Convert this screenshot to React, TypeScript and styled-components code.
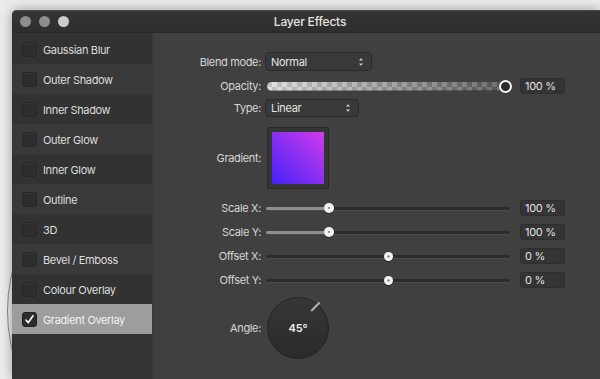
import React from "react";
import styled, { createGlobalStyle } from "styled-components";

const GlobalStyle = createGlobalStyle`
  html, body {
    margin: 0;
    padding: 0;
    background: #ececec;
    font-family: "Inter", "Liberation Sans", sans-serif;
    -webkit-font-smoothing: antialiased;
  }
  #root {
    width: 600px;
    height: 379px;
    overflow: hidden;
  }
`;

const Stage = styled.div`
  position: relative;
  width: 600px;
  height: 379px;
  padding: 10px 0 0 12px;
  box-sizing: border-box;
  overflow: hidden;
`;

// Edge of a round loupe peeking from behind the window
const Loupe = styled.div`
  position: absolute;
  left: 7px;
  top: 146px;
  width: 330px;
  height: 330px;
  border-radius: 50%;
  border: 1.5px solid #8c8c8c;
  box-sizing: border-box;
  z-index: 0;
`;

const Window = styled.div`
  position: relative;
  z-index: 1;
  width: 588px;
  height: 369px;
  display: flex;
  flex-direction: column;
  background: #404040;
  box-shadow: 0 0 12px rgba(0, 0, 0, 0.35);
  border-top-left-radius: 5px;
  overflow: hidden;
`;

const TitleBar = styled.div`
  position: relative;
  height: 22px;
  flex: 0 0 22px;
  display: flex;
  align-items: center;
  padding-left: 8px;
  gap: 8px;
  background: linear-gradient(#353535, #2e2e2e);
  border-top: 1px solid #4a4a4a;
  box-sizing: border-box;
`;

const Light = styled.span<{ $tone: string }>`
  width: 11px;
  height: 11px;
  border-radius: 50%;
  background: ${({ $tone }) => $tone};
`;

const Title = styled.div`
  position: absolute;
  left: 0;
  right: 0;
  text-align: center;
  padding-left: 8px;
  font-size: 12px;
  font-weight: 500;
  letter-spacing: -0.2px;
  color: #e2e2e2;
  pointer-events: none;
`;

const Body = styled.div`
  flex: 1;
  display: flex;
  border-top: 1px solid #2a2a2a;
`;

const Sidebar = styled.div`
  width: 141px;
  flex: 0 0 141px;
  background: #333333;
  display: flex;
  flex-direction: column;
  padding-top: 1px;
  border-right: 1px solid #3a3a3a;
  box-sizing: border-box;
`;

const EffectRow = styled.div<{ $alt: boolean; $selected: boolean }>`
  height: 30px;
  display: flex;
  align-items: center;
  gap: 6px;
  padding: 1px 0 0 10px;
  box-sizing: border-box;
  font-size: 11px;
  letter-spacing: -0.35px;
  color: ${({ $selected }) => ($selected ? "#f2f2f2" : "#dcdcdc")};
  background: ${({ $alt, $selected }) =>
    $selected ? "#9d9d9d" : $alt ? "#393939" : "#323232"};
`;

const Check = styled.span<{ $on: boolean }>`
  width: 15px;
  height: 15px;
  border-radius: 3px;
  box-sizing: border-box;
  display: flex;
  align-items: center;
  justify-content: center;
  background: ${({ $on }) => ($on ? "#2c2c2c" : "#2e2e2e")};
  border: 1px solid ${({ $on }) => ($on ? "#1f1f1f" : "#262626")};
  box-shadow: inset 0 1px 0 rgba(255, 255, 255, 0.04);
`;

const Panel = styled.div`
  flex: 1;
  padding-top: 19px;
  display: flex;
  flex-direction: column;
`;

const Row = styled.div<{ $h: number; $top: number }>`
  height: ${({ $h }) => $h}px;
  margin-top: ${({ $top }) => $top}px;
  display: grid;
  grid-template-columns: 108px 1fr;
  column-gap: 4px;
  align-items: center;
`;

const Label = styled.div`
  text-align: right;
  font-size: 11px;
  letter-spacing: -0.35px;
  color: #d6d6d6;
`;

const Controls = styled.div`
  display: flex;
  align-items: center;
  height: 100%;
`;

const Select = styled.div<{ $w: number }>`
  width: ${({ $w }) => $w}px;
  height: 100%;
  box-sizing: border-box;
  border: 1px solid #2b2b2b;
  border-radius: 4px;
  background: #393939;
  display: flex;
  align-items: center;
  justify-content: space-between;
  padding: 0 7px 0 5px;
  font-size: 11px;
  letter-spacing: -0.3px;
  color: #e4e4e4;
`;

const OpacityBar = styled.div`
  position: relative;
  margin-left: 2px;
  width: 244px;
  height: 9px;
  border-radius: 5px;
  background-image: linear-gradient(
      to right,
      rgba(255, 255, 255, 0.55),
      rgba(40, 40, 40, 0.55)
    ),
    conic-gradient(#bdbdbd 25%, #7d7d7d 0 50%, #bdbdbd 0 75%, #7d7d7d 0);
  background-size: 100% 100%, 10px 10px;
  box-shadow: inset 0 -1px 0 rgba(0, 0, 0, 0.3);
`;

const RingKnob = styled.span`
  position: absolute;
  right: -1px;
  top: -2px;
  width: 9px;
  height: 9px;
  border-radius: 50%;
  border: 2px solid #f4f4f4;
  background: #2b2b2b;
`;

const Field = styled.div<{ $gap: number }>`
  margin-left: ${({ $gap }) => $gap}px;
  width: 45px;
  height: 16px;
  box-sizing: border-box;
  border: 1px solid #2e2e2e;
  border-radius: 3px;
  background: #343434;
  font-size: 11px;
  letter-spacing: -0.3px;
  color: #e0e0e0;
  display: flex;
  align-items: center;
  padding-left: 4px;
`;

const Track = styled.div`
  position: relative;
  margin-left: 1px;
  width: 244px;
  height: 3px;
  border-radius: 2px;
  background: #2c2c2c;
  box-shadow: 0 1px 0 rgba(255, 255, 255, 0.05);
`;

const TrackFill = styled.div`
  position: absolute;
  left: 0;
  top: 0;
  bottom: 0;
  border-radius: 2px;
  background: #8e8e8e;
`;

const Thumb = styled.span<{ $size: number }>`
  position: absolute;
  top: 50%;
  width: ${({ $size }) => $size}px;
  height: ${({ $size }) => $size}px;
  margin-left: ${({ $size }) => -$size / 2}px;
  margin-top: ${({ $size }) => -$size / 2}px;
  border-radius: 50%;
  background: radial-gradient(circle, #9a9a9a 0 1px, #f2f2f2 1.5px);
  box-shadow: 0 1px 1px rgba(0, 0, 0, 0.4);
`;

const Well = styled.div`
  margin-left: 2px;
  width: 62px;
  height: 62px;
  box-sizing: border-box;
  padding: 4px;
  border: 1px solid #272727;
  border-radius: 2px;
  background: #353535;
`;

const Swatch = styled.div`
  width: 100%;
  height: 100%;
  background: linear-gradient(45deg, #4522f6 0%, #8a2ff2 50%, #d23ced 100%);
`;

const Dial = styled.div`
  position: relative;
  margin-left: 2px;
  width: 62px;
  height: 62px;
  box-sizing: border-box;
  border-radius: 50%;
  border: 1px solid #242424;
  background: linear-gradient(#363636, #2a2a2a);
  display: flex;
  align-items: center;
  justify-content: center;
  font-size: 11px;
  font-weight: 600;
  color: #ececec;
`;

const DialMark = styled.span`
  position: absolute;
  left: 43px;
  top: 12px;
  width: 12px;
  height: 1.5px;
  background: #b0b0b0;
  transform: rotate(-45deg);
  transform-origin: left center;
`;

const Updown = () => (
  <svg width="6" height="10" viewBox="0 0 6 10">
    <path d="M0.8 3.6 L3 1.2 L5.2 3.6 Z" fill="#cfcfcf" />
    <path d="M0.8 6.4 L3 8.8 L5.2 6.4 Z" fill="#cfcfcf" />
  </svg>
);

const Tick = () => (
  <svg width="11" height="11" viewBox="0 0 11 11">
    <path
      d="M2 6 L4.3 8.6 L9 1.8"
      fill="none"
      stroke="#ffffff"
      strokeWidth="1.6"
      strokeLinecap="round"
      strokeLinejoin="round"
    />
  </svg>
);

const effects = [
  "Gaussian Blur",
  "Outer Shadow",
  "Inner Shadow",
  "Outer Glow",
  "Inner Glow",
  "Outline",
  "3D",
  "Bevel / Emboss",
  "Colour Overlay",
  "Gradient Overlay",
];

const sliders = [
  { label: "Scale X:", pos: 63, fill: true, value: "100 %", top: 11, size: 10 },
  { label: "Scale Y:", pos: 63, fill: true, value: "100 %", top: 8, size: 10 },
  { label: "Offset X:", pos: 122, fill: false, value: "0 %", top: 8, size: 9 },
  { label: "Offset Y:", pos: 122, fill: false, value: "0 %", top: 8, size: 9 },
];

export default function App() {
  return (
    <Stage>
      <GlobalStyle />
      <Loupe />
      <Window>
        <TitleBar>
          <Light $tone="#8d8d8d" />
          <Light $tone="#8d8d8d" />
          <Light $tone="#cbcbcb" />
          <Title>Layer Effects</Title>
        </TitleBar>
        <Body>
          <Sidebar>
            {effects.map((name, i) => {
              const on = name === "Gradient Overlay";
              return (
                <EffectRow key={name} $alt={i % 2 === 1} $selected={on}>
                  <Check $on={on}>{on && <Tick />}</Check>
                  {name}
                </EffectRow>
              );
            })}
          </Sidebar>
          <Panel>
            <Row $h={19} $top={0}>
              <Label>Blend mode:</Label>
              <Controls>
                <Select $w={107}>
                  Normal
                  <Updown />
                </Select>
              </Controls>
            </Row>
            <Row $h={16} $top={7}>
              <Label>Opacity:</Label>
              <Controls>
                <OpacityBar>
                  <RingKnob />
                </OpacityBar>
                <Field $gap={9}>100 %</Field>
              </Controls>
            </Row>
            <Row $h={18} $top={5}>
              <Label>Type:</Label>
              <Controls>
                <Select $w={94}>
                  Linear
                  <Updown />
                </Select>
              </Controls>
            </Row>
            <Row $h={62} $top={10}>
              <Label>Gradient:</Label>
              <Controls>
                <Well>
                  <Swatch />
                </Well>
              </Controls>
            </Row>
            {sliders.map((s) => (
              <Row key={s.label} $h={16} $top={s.top}>
                <Label>{s.label}</Label>
                <Controls>
                  <Track>
                    {s.fill && <TrackFill style={{ width: s.pos }} />}
                    <Thumb $size={s.size} style={{ left: s.pos }} />
                  </Track>
                  <Field $gap={10}>{s.value}</Field>
                </Controls>
              </Row>
            ))}
            <Row $h={62} $top={9}>
              <Label>Angle:</Label>
              <Controls>
                <Dial>
                  <DialMark />
                  45°
                </Dial>
              </Controls>
            </Row>
          </Panel>
        </Body>
      </Window>
    </Stage>
  );
}
